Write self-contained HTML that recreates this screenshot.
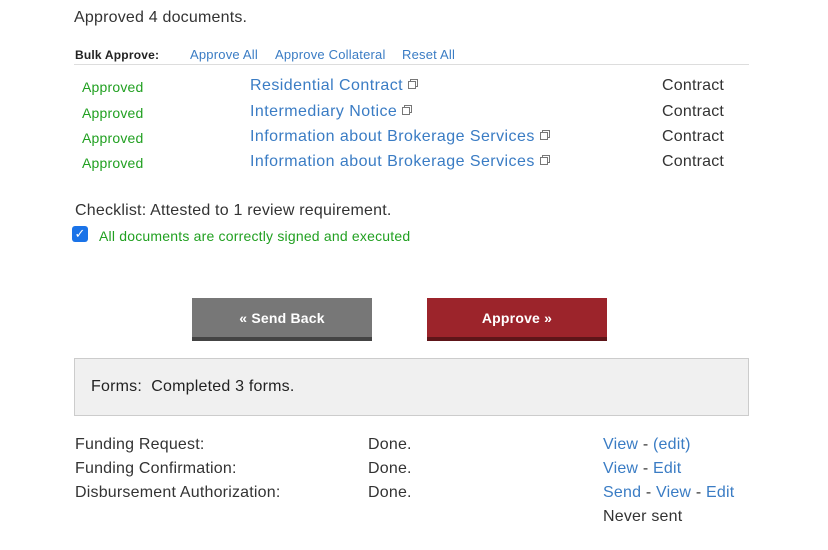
<!DOCTYPE html>
<html><head><style>
body{margin:0;width:828px;height:550px;background:#fff;font-family:"Liberation Sans",sans-serif;color:#333;position:relative;overflow:hidden;letter-spacing:0.2px}
.a{position:absolute;white-space:nowrap}
.l{color:#3a7cc4}
.g{color:#21a021;font-size:14px}
.d{font-size:16px;color:#3a7cc4;letter-spacing:0.45px}
.ext{display:inline-block;width:6px;height:6px;border:1px solid #777;margin-left:5px;position:relative;top:-1px;vertical-align:middle;box-shadow:2px -2px 0 -1px #fff,2px -2px 0 0 #777}
.b{position:absolute;top:298px;width:180px;height:39px;border-bottom:4px solid;color:#fff;font-size:14px;font-weight:bold;text-align:center;line-height:40px}
</style></head><body>
<div class="a" style="left:74px;top:9px;font-size:16px">Approved 4 documents.</div>
<div class="a" style="left:75px;top:48px;font-size:12px;font-weight:bold;color:#222">Bulk Approve:</div>
<div class="a l" style="left:190px;top:47px;font-size:13px">Approve All</div>
<div class="a l" style="left:275px;top:47px;font-size:13px">Approve Collateral</div>
<div class="a l" style="left:402px;top:47px;font-size:13px">Reset All</div>
<div class="a" style="left:74px;top:64px;width:675px;border-top:1px solid #ddd"></div>

<div class="a g" style="left:82px;top:79px">Approved</div>
<div class="a d" style="left:250px;top:77px">Residential Contract<span class="ext"></span></div>
<div class="a" style="left:662px;top:77px;font-size:16px">Contract</div>
<div class="a g" style="left:82px;top:105px">Approved</div>
<div class="a d" style="left:250px;top:103px">Intermediary Notice<span class="ext"></span></div>
<div class="a" style="left:662px;top:103px;font-size:16px">Contract</div>
<div class="a g" style="left:82px;top:130px">Approved</div>
<div class="a d" style="left:250px;top:128px">Information about Brokerage Services<span class="ext"></span></div>
<div class="a" style="left:662px;top:128px;font-size:16px">Contract</div>
<div class="a g" style="left:82px;top:155px">Approved</div>
<div class="a d" style="left:250px;top:153px">Information about Brokerage Services<span class="ext"></span></div>
<div class="a" style="left:662px;top:153px;font-size:16px">Contract</div>

<div class="a" style="left:75px;top:202px;font-size:16px">Checklist: Attested to 1 review requirement.</div>
<div class="a" style="left:72px;top:226px;width:16px;height:16px;background:#1a73e8;border-radius:3px;color:#fff;font-size:13px;line-height:16px;text-align:center">✓</div>
<div class="a g" style="left:99px;top:228px">All documents are correctly signed and executed</div>

<div class="b" style="left:192px;background:#777;border-color:#444">« Send Back</div>
<div class="b" style="left:427px;background:#9c242b;border-color:#5e1519">Approve »</div>

<div class="a" style="left:74px;top:358px;width:673px;height:56px;background:#f0f0f0;border:1px solid #ccc"></div>
<div class="a" style="left:91px;top:378px;font-size:16px;color:#222">Forms:&nbsp; Completed 3 forms.</div>

<div class="a" style="left:75px;top:436px;font-size:16px">Funding Request:</div>
<div class="a" style="left:368px;top:436px;font-size:16px">Done.</div>
<div class="a" style="left:603px;top:436px;font-size:16px"><span class="l">View</span> - <span class="l">(edit)</span></div>
<div class="a" style="left:75px;top:460px;font-size:16px">Funding Confirmation:</div>
<div class="a" style="left:368px;top:460px;font-size:16px">Done.</div>
<div class="a" style="left:603px;top:460px;font-size:16px"><span class="l">View</span> - <span class="l">Edit</span></div>
<div class="a" style="left:75px;top:484px;font-size:16px">Disbursement Authorization:</div>
<div class="a" style="left:368px;top:484px;font-size:16px">Done.</div>
<div class="a" style="left:603px;top:484px;font-size:16px"><span class="l">Send</span> - <span class="l">View</span> - <span class="l">Edit</span></div>
<div class="a" style="left:603px;top:508px;font-size:16px">Never sent</div>
</body></html>
